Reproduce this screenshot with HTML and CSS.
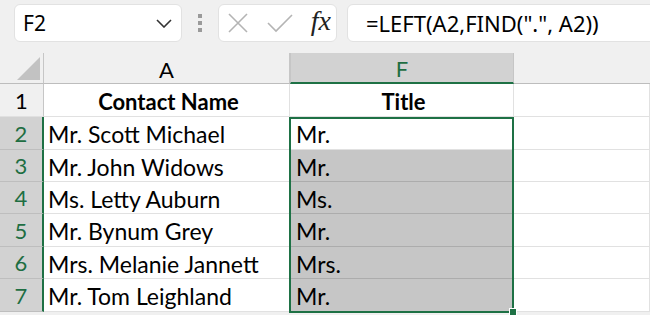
FILE: index.html
```html
<!DOCTYPE html>
<html lang="en">
<head>
    <meta charset="UTF-8">
    <title>LEFT / FIND - Title</title>
    <link rel="stylesheet" href="styles.css">
</head>
<body>
    <div class="toolbar">
        <div class="name-box">
            <span>F2</span>
            <svg class="chevron" width="16" height="9" viewBox="0 0 16 9"><path d="M1 1 L8 8 L15 1" fill="none" stroke="#333" stroke-width="1.6"/></svg>
        </div>
        <div class="grip"><i></i><i></i><i></i></div>
        <div class="fx-box">
            <svg width="22" height="22" viewBox="0 0 22 22"><path d="M2 2 L20 20 M20 2 L2 20" stroke="#b4b4b4" stroke-width="1.6" fill="none"/></svg>
            <svg width="26" height="22" viewBox="0 0 26 22"><path d="M1 11 L9 19 L25 3" stroke="#b4b4b4" stroke-width="1.6" fill="none"/></svg>
            <span class="fx">fx</span>
        </div>
        <div class="formula">=LEFT(A2,FIND(".", A2))</div>
    </div>

    <div class="sheet">
        <div class="corner"><span class="tri"></span></div>
        <div class="col-head">A</div>
        <div class="col-head sel">F</div>
        <div class="col-head blank"></div>

        <div class="row-head">1</div>
        <div class="cell bold center">Contact Name</div>
        <div class="cell bold center">Title</div>
        <div class="cell"></div>

        <div class="row-head sel">2</div>
        <div class="cell">Mr. Scott Michael</div>
        <div class="cell active">Mr.</div>
        <div class="cell"></div>

        <div class="row-head sel">3</div>
        <div class="cell">Mr. John Widows</div>
        <div class="cell picked">Mr.</div>
        <div class="cell"></div>

        <div class="row-head sel">4</div>
        <div class="cell">Ms. Letty Auburn</div>
        <div class="cell picked">Ms.</div>
        <div class="cell"></div>

        <div class="row-head sel">5</div>
        <div class="cell">Mr. Bynum Grey</div>
        <div class="cell picked">Mr.</div>
        <div class="cell"></div>

        <div class="row-head sel">6</div>
        <div class="cell">Mrs. Melanie Jannett</div>
        <div class="cell picked">Mrs.</div>
        <div class="cell"></div>

        <div class="row-head sel">7</div>
        <div class="cell">Mr. Tom Leighland</div>
        <div class="cell picked">Mr.</div>
        <div class="cell"></div>

        <!-- selection outline over F2:F7 -->
        <div class="selection"><span class="handle"></span></div>
    </div>
</body>
</html>
```

FILE: styles.css
```css
* {
    margin: 0;
    padding: 0;
    box-sizing: border-box;
}

body {
    width: 650px;
    height: 315px;
    overflow: hidden;
    background: #f0f0f0;
    font-family: Lato, 'Liberation Sans', sans-serif;
    color: #000;
}

/* formula bar */
.toolbar {
    display: flex;
    align-items: center;
    height: 53px;
    padding: 4px 0 11px 14px;
}

.name-box,
.fx-box,
.formula {
    height: 38px;
    background: white;
    border: 1px solid #e2e2e2;
    border-radius: 6px;
    display: flex;
    align-items: center;
}

.name-box {
    width: 168px;
    padding: 0 8px;
    justify-content: space-between;
    font-family: 'Noto Sans', sans-serif;
    font-size: 21px;
}

.chevron {
    margin-right: 1px;
}

.grip {
    width: 36px;
    display: flex;
    flex-direction: column;
    align-items: center;
    gap: 3px;
}

.grip i {
    width: 4px;
    height: 4px;
    background: #9a9a9a;
}

.fx-box {
    width: 119px;
    padding: 0 5px 0 8px;
    justify-content: space-between;
}

.fx {
    font-family: 'Liberation Serif', serif;
    font-style: italic;
    font-size: 28px;
    color: #222;
    margin-top: -5px;
}

.formula {
    flex: 1;
    margin-left: 10px;
    margin-right: -10px;
    padding-left: 18px;
    font-family: 'Noto Sans', sans-serif;
    font-size: 22px;
}

/* grid */
.sheet {
    position: relative;
    display: grid;
    grid-template-columns: 44px 246px 224px 136px;
    grid-template-rows: 31px 33px 33px 32px 32px 33px 32px 33px;
    background: white;
}

.corner,
.col-head,
.row-head {
    background: #f0f0f0;
    display: flex;
    align-items: center;
    justify-content: center;
    font-size: 22px;
}

.corner {
    border-right: 1px solid #c6c6c6;
    border-bottom: 1px solid #bdbdbd;
    position: relative;
}

.tri {
    position: absolute;
    right: 3px;
    bottom: 3px;
    width: 0;
    height: 0;
    border-left: 23px solid transparent;
    border-bottom: 23px solid #c2c2c2;
}

.col-head {
    border-right: 1px solid #c6c6c6;
    border-bottom: 1px solid #bdbdbd;
    padding-top: 2px;
}

.col-head.sel {
    background: #d2d2d2;
    color: #1e6e42;
    border-bottom: 2px solid #1e7145;
    border-left: 1px solid #c6c6c6;
}

.col-head.blank {
    border-right: none;
}

.row-head {
    border-right: 1px solid #c6c6c6;
    border-bottom: 1px solid #e0e0e0;
}

.row-head.sel {
    background: #d2d2d2;
    color: #1e6e42;
    border-right: 2px solid #1e7145;
    border-bottom: 1px solid #bebebe;
}

.cell {
    border-right: 1px solid #e1e1e1;
    border-bottom: 1px solid #e1e1e1;
    display: flex;
    align-items: center;
    padding: 2px 0 0 4px;
    font-size: 23px;
    white-space: nowrap;
}

.cell.bold {
    font-weight: bold;
    font-size: 22px;
}

.cell.center {
    justify-content: center;
}

.cell.active,
.cell.picked {
    padding-left: 6px;
}

.cell.picked {
    background: #c6c6c6;
    border-bottom-color: #acacac;
}

.selection {
    position: absolute;
    grid-column: 3 / 4;
    grid-row: 3 / 9;
    top: 0;
    bottom: -1px;
    left: -1px;
    right: 0;
    border: 2px solid #1e7145;
    pointer-events: none;
}

.handle {
    position: absolute;
    right: -5px;
    bottom: -5px;
    width: 8px;
    height: 8px;
    background: #1e7145;
    border: 1px solid white;
}
```
